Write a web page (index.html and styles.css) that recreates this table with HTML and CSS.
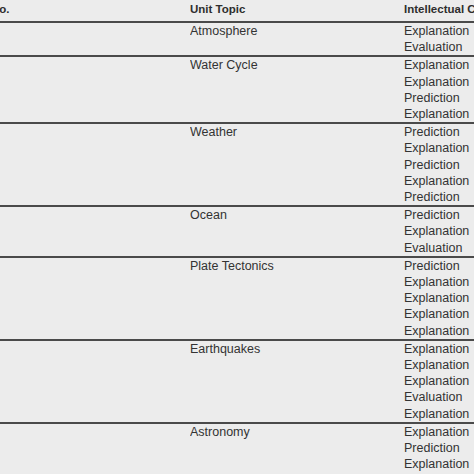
FILE: index.html
```html
<!DOCTYPE html>
<html>
<head>
<meta charset="utf-8">
<link rel="stylesheet" href="styles.css">
</head>
<body>
<div class="page">
  <div class="table">
    <div class="row head">
      <div class="cell">No.</div>
      <div class="cell">Unit Topic</div>
      <div class="cell">Intellectual Challenge</div>
    </div>
    <div class="row">
      <div class="cell"></div>
      <div class="cell">Atmosphere</div>
      <div class="cell">Explanation<br>Evaluation</div>
    </div>
    <div class="row">
      <div class="cell"></div>
      <div class="cell">Water Cycle</div>
      <div class="cell">Explanation<br>Explanation<br>Prediction<br>Explanation</div>
    </div>
    <div class="row">
      <div class="cell"></div>
      <div class="cell">Weather</div>
      <div class="cell">Prediction<br>Explanation<br>Prediction<br>Explanation<br>Prediction</div>
    </div>
    <div class="row">
      <div class="cell"></div>
      <div class="cell">Ocean</div>
      <div class="cell">Prediction<br>Explanation<br>Evaluation</div>
    </div>
    <div class="row">
      <div class="cell"></div>
      <div class="cell">Plate Tectonics</div>
      <div class="cell">Prediction<br>Explanation<br>Explanation<br>Explanation<br>Explanation</div>
    </div>
    <div class="row">
      <div class="cell"></div>
      <div class="cell">Earthquakes</div>
      <div class="cell">Explanation<br>Explanation<br>Explanation<br>Evaluation<br>Explanation</div>
    </div>
    <div class="row">
      <div class="cell"></div>
      <div class="cell">Astronomy</div>
      <div class="cell">Explanation<br>Prediction<br>Explanation<br>Evaluation</div>
    </div>
  </div>
</div>
</body>
</html>
```

FILE: styles.css
```css
html, body {
  margin: 0;
  padding: 0;
  background: #ececec;
  overflow: hidden;
}
.page {
  width: 474px;
  height: 474px;
  overflow: hidden;
  font-family: "Liberation Sans", Arial, sans-serif;
  color: #333;
}
.table {
  margin-left: -9px;
  width: 620px;
}
.row {
  display: grid;
  grid-template-columns: 199px 214px 1fr;
  border-bottom: 2px solid #4a4a4a;
  font-size: 12.5px;
  line-height: 16.2px;
  white-space: nowrap;
}
.row.head {
  font-weight: bold;
  font-size: 11.5px;
  line-height: 16px;
  padding-top: 1px;
  padding-bottom: 4px;
  color: #2e2e2e;
}
.cell {
  overflow: hidden;
}
```
